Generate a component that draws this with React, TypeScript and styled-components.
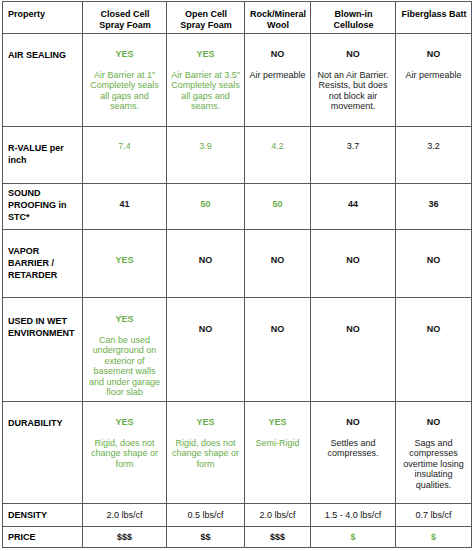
import React from "react";
import styled, { createGlobalStyle } from "styled-components";

const Global = createGlobalStyle`
  html, body { margin: 0; padding: 0; background: #fff; }
  body { font-family: "Liberation Sans", Arial, sans-serif; -webkit-font-smoothing: antialiased; }
`;

const GREEN = "#6aad4a";
const LINE = "#595959";

type Tone = "green" | "black";

interface Value {
  title: string;
  tone: Tone;
  bold?: boolean;
  note?: string[];
  top?: number;
}

interface Row {
  label: string[];
  labelTop: number;
  valueTop: number;
  height: number;
  center?: boolean;
  values: Value[];
}

const headers: string[][] = [
  ["Closed Cell", "Spray Foam"],
  ["Open Cell", "Spray Foam"],
  ["Rock/Mineral", "Wool"],
  ["Blown-in", "Cellulose"],
  ["Fiberglass Batt"],
];

const rows: Row[] = [
  {
    label: ["AIR SEALING"],
    labelTop: 15,
    valueTop: 15,
    height: 93,
    values: [
      { title: "YES", tone: "green", bold: true, note: ["Air Barrier at 1\"", "Completely seals", "all gaps and", "seams."] },
      { title: "YES", tone: "green", bold: true, note: ["Air Barrier at 3.5\"", "Completely seals", "all gaps and", "seams."] },
      { title: "NO", tone: "black", bold: true, note: ["Air permeable"] },
      { title: "NO", tone: "black", bold: true, note: ["Not an Air Barrier.", "Resists, but does", "not block air", "movement."] },
      { title: "NO", tone: "black", bold: true, note: ["Air permeable"] },
    ],
  },
  {
    label: ["R-VALUE per", "inch"],
    labelTop: 15,
    valueTop: 14,
    height: 57,
    values: [
      { title: "7.4", tone: "green" },
      { title: "3.9", tone: "green" },
      { title: "4.2", tone: "green" },
      { title: "3.7", tone: "black" },
      { title: "3.2", tone: "black" },
    ],
  },
  {
    label: ["SOUND", "PROOFING in", "STC*"],
    labelTop: 3,
    valueTop: 15,
    height: 46,
    values: [
      { title: "41", tone: "black", bold: true },
      { title: "50", tone: "green", bold: true },
      { title: "50", tone: "green", bold: true },
      { title: "44", tone: "black", bold: true },
      { title: "36", tone: "black", bold: true },
    ],
  },
  {
    label: ["VAPOR", "BARRIER /", "RETARDER"],
    labelTop: 15,
    valueTop: 25,
    height: 68,
    values: [
      { title: "YES", tone: "green", bold: true },
      { title: "NO", tone: "black", bold: true },
      { title: "NO", tone: "black", bold: true },
      { title: "NO", tone: "black", bold: true },
      { title: "NO", tone: "black", bold: true },
    ],
  },
  {
    label: ["USED IN WET", "ENVIRONMENT"],
    labelTop: 17,
    valueTop: 26,
    height: 104,
    values: [
      {
        title: "YES",
        tone: "green",
        bold: true,
        top: 16,
        note: ["Can be used", "underground on", "exterior of", "basement walls", "and under garage", "floor slab"],
      },
      { title: "NO", tone: "black", bold: true },
      { title: "NO", tone: "black", bold: true },
      { title: "NO", tone: "black", bold: true },
      { title: "NO", tone: "black", bold: true },
    ],
  },
  {
    label: ["DURABILITY"],
    labelTop: 15,
    valueTop: 15,
    height: 102,
    values: [
      { title: "YES", tone: "green", bold: true, note: ["Rigid, does not", "change shape or", "form"] },
      { title: "YES", tone: "green", bold: true, note: ["Rigid, does not", "change shape or", "form"] },
      { title: "YES", tone: "green", bold: true, note: ["Semi-Rigid"] },
      { title: "NO", tone: "black", bold: true, note: ["Settles and", "compresses."] },
      { title: "NO", tone: "black", bold: true, note: ["Sags and", "compresses", "overtime losing", "insulating", "qualities."] },
    ],
  },
  {
    label: ["DENSITY"],
    labelTop: 0,
    valueTop: 0,
    height: 23,
    center: true,
    values: [
      { title: "2.0 lbs/cf", tone: "black" },
      { title: "0.5 lbs/cf", tone: "black" },
      { title: "2.0 lbs/cf", tone: "black" },
      { title: "1.5 - 4.0 lbs/cf", tone: "black" },
      { title: "0.7 lbs/cf", tone: "black" },
    ],
  },
  {
    label: ["PRICE"],
    labelTop: 0,
    valueTop: 0,
    height: 21,
    center: true,
    values: [
      { title: "$$$", tone: "black", bold: true },
      { title: "$$", tone: "black", bold: true },
      { title: "$$$", tone: "black", bold: true },
      { title: "$", tone: "green", bold: true },
      { title: "$", tone: "green", bold: true },
    ],
  },
];

const Page = styled.div`
  padding: 1px 0 0 2px;
`;

const Sheet = styled.div<{ $rows: string }>`
  display: grid;
  grid-template-columns: 80px 84px 78px 66px 85px 76px;
  grid-template-rows: ${(p) => p.$rows};
  width: max-content;
  border-top: 1px solid ${LINE};
  border-left: 1px solid ${LINE};
  font-size: 9px;
  color: #111;
`;

const Cell = styled.div<{ $top: number; $center?: boolean }>`
  box-sizing: border-box;
  border-right: 1px solid ${LINE};
  border-bottom: 1px solid ${LINE};
  padding: ${(p) => (p.$center ? 0 : p.$top)}px 4px 0 5px;
  display: flex;
  flex-direction: column;
  justify-content: ${(p) => (p.$center ? "center" : "flex-start")};
  overflow: hidden;
`;

const HeadCell = styled(Cell)<{ $left?: boolean }>`
  align-items: ${(p) => (p.$left ? "flex-start" : "center")};
  text-align: ${(p) => (p.$left ? "left" : "center")};
  font-weight: bold;
  line-height: 10.6px;
  color: #000;
  white-space: nowrap;
`;

const LabelCell = styled(Cell)`
  font-weight: bold;
  line-height: 12px;
  color: #000;
  white-space: nowrap;
`;

const ValueCell = styled(Cell)`
  align-items: center;
  text-align: center;
  padding-left: 3px;
  padding-right: 3px;
  white-space: nowrap;
`;

const Title = styled.div<{ $tone: Tone; $bold?: boolean }>`
  color: ${(p) => (p.$tone === "green" ? GREEN : "#111")};
  font-weight: ${(p) => (p.$bold ? "bold" : "normal")};
  line-height: 10.5px;
`;

const Note = styled.div<{ $tone: Tone }>`
  margin-top: 10px;
  color: ${(p) => (p.$tone === "green" ? GREEN : "#222")};
  line-height: 10.6px;
`;

const Lines: React.FC<{ lines: string[] }> = ({ lines }) => (
  <>
    {lines.map((l, i) => (
      <React.Fragment key={i}>
        {i > 0 && <br />}
        {l}
      </React.Fragment>
    ))}
  </>
);

export default function App() {
  const template = ["32px", ...rows.map((r) => `${r.height}px`)].join(" ");
  return (
    <Page>
      <Global />
      <Sheet $rows={template}>
        <HeadCell $top={7} $left>
          Property
        </HeadCell>
        {headers.map((h, i) => (
          <HeadCell key={i} $top={7}>
            <Lines lines={h} />
          </HeadCell>
        ))}
        {rows.map((r, ri) => (
          <React.Fragment key={ri}>
            <LabelCell $top={r.labelTop} $center={r.center}>
              <Lines lines={r.label} />
            </LabelCell>
            {r.values.map((v, vi) => (
              <ValueCell key={vi} $top={v.top ?? r.valueTop} $center={r.center}>
                <Title $tone={v.tone} $bold={v.bold}>
                  {v.title}
                </Title>
                {v.note && (
                  <Note $tone={v.tone}>
                    <Lines lines={v.note} />
                  </Note>
                )}
              </ValueCell>
            ))}
          </React.Fragment>
        ))}
      </Sheet>
    </Page>
  );
}
